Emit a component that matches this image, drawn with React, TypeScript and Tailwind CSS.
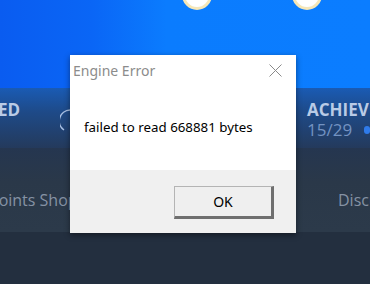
import React from "react";

export default function App() {
  return (
    <div className="relative w-[370px] h-[284px] overflow-hidden bg-[#232f3f] font-['Noto_Sans',sans-serif]">
      {/* top hero */}
      <div className="relative h-[88px] bg-[linear-gradient(90deg,#0a5cf0_0%,#0a66f6_25%,#0b7cfe_45%,#0b7dff_100%)]">
        <div className="absolute left-[182px] top-[-22px] w-[30px] h-[32px] rounded-full bg-white border-[3px] border-[#f6e7b8]" />
        <div className="absolute left-[292px] top-[-22px] w-[30px] h-[32px] rounded-full bg-white border-[3px] border-[#f6e7b8]" />
      </div>
      {/* stats band */}
      <div className="h-[60px] bg-[linear-gradient(180deg,#1a5bb4_0%,#1e4a88_40%,#243a5c_100%)] flex justify-between pt-[12px]">
        <div className="flex items-start">
          <div className="ml-[-2px] text-[17px] font-bold leading-[20px] text-[#b9cbe6] font-['Open_Sans',sans-serif]">ED</div>
          <svg className="ml-[40px] mt-[8px]" width="20" height="26" viewBox="0 0 20 26">
            <path d="M10 2 A11 11 0 0 0 4 22" stroke="#a9c0e4" strokeWidth="1.5" fill="none" />
          </svg>
        </div>
        <div className="w-[63px] flex flex-col">
          <div className="text-[17px] font-bold leading-[20px] text-[#b9cbe6] whitespace-nowrap font-['Open_Sans',sans-serif]">ACHIEV</div>
          <div className="flex items-center text-[17px] leading-[20px] text-[#7393c2] font-['Open_Sans',sans-serif]">
            15/29
            <span className="ml-[12px] w-[8px] h-[8px] rounded-full bg-[#2f7bea]" />
          </div>
        </div>
      </div>
      {/* nav band */}
      <div className="h-[84px] bg-[linear-gradient(180deg,#253650_0%,#2a3849_40%,#2c3a4a_100%)] flex justify-between items-center pt-[20px]">
        <div className="ml-[-11px] text-[16px] text-[#8592a4] whitespace-nowrap font-['Open_Sans',sans-serif]">Points Shop</div>
        <div className="w-[32px] text-[16px] text-[#8592a4] whitespace-nowrap font-['Open_Sans',sans-serif]">Discussions</div>
      </div>

      {/* dialog */}
      <div className="absolute left-[70px] top-[55px] w-[226px] h-[178px] bg-white shadow-[0_2px_6px_rgba(0,0,0,0.45)] flex flex-col">
        <div className="h-[33px] flex items-start justify-between">
          <div className="ml-[3px] mt-[6px] text-[14px] leading-[20px] text-[#8c8c8c]">Engine Error</div>
          <svg className="mr-[14px] mt-[9px]" width="13" height="13" viewBox="0 0 13 13">
            <path d="M0.5 0.5 L12.5 12.5 M12.5 0.5 L0.5 12.5" stroke="#8a8a8a" strokeWidth="1" fill="none" />
          </svg>
        </div>
        <div className="h-[82px] pl-[14px] pt-[30px] text-[13.3px] leading-[18px] text-black">failed to read 668881 bytes</div>
        <div className="flex-1 bg-[#f0f0f0] flex justify-end items-start pt-[16px] pr-[22px]">
          <button className="w-[100px] h-[33px] bg-[#efefef] border border-[#b4b4b4] border-b-[3px] border-r-[3px] border-b-[#6f6f6f] border-r-[#6f6f6f] text-[14px] text-black">OK</button>
        </div>
      </div>
    </div>
  );
}
